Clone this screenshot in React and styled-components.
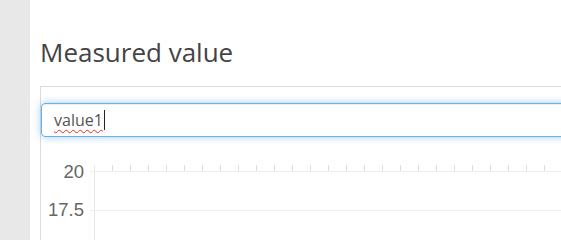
import styled, { createGlobalStyle } from "styled-components";

const GlobalStyle = createGlobalStyle`
  html, body {
    margin: 0;
    padding: 0;
    background: #fff;
    overflow: hidden;
  }
  body {
    font-family: "Open Sans", "Liberation Sans", sans-serif;
  }
`;

const Page = styled.div`
  display: flex;
  height: 100vh;
  overflow: hidden;
`;

const Sidebar = styled.div`
  width: 30px;
  flex: none;
  background: #e8e8e8;
`;

const Main = styled.div`
  flex: 1;
  padding: 36px 0 0 10px;
  min-width: 0;
  overflow: hidden;
`;

const Title = styled.h2`
  margin: 0 0 18px;
  font-size: 26px;
  font-weight: 400;
  line-height: 32px;
  color: #444;
`;

const Panel = styled.div`
  width: calc(100% + 20px);
  border: 1px solid #dcdcdc;
  border-right: none;
  border-bottom: none;
  padding-top: 16px;
  height: 160px;
`;

const Field = styled.div`
  box-sizing: border-box;
  display: flex;
  align-items: center;
  height: 34px;
  padding: 0 12px;
  border: 1px solid #66afe9;
  border-radius: 4px;
  box-shadow: inset 0 1px 1px rgba(0, 0, 0, 0.075),
    0 0 8px rgba(102, 175, 233, 0.6);
  font-size: 16px;
  color: #555;
`;

const Misspelled = styled.span`
  text-decoration: underline wavy #e03030;
  text-decoration-thickness: 1px;
  text-underline-offset: 3px;
`;

const Caret = styled.span`
  display: inline-block;
  width: 1px;
  height: 20px;
  margin-left: 1px;
  background: #222;
`;

const Chart = styled.svg`
  display: block;
  width: 100%;
  margin-top: 14px;
`;

const Label = styled.text`
  font-family: "Liberation Sans", Arial, sans-serif;
  font-size: 18.5px;
  fill: #666;
`;

const ticks = Array.from({ length: 26 }, (_, i) => 53.5 + 18 * (i + 1));

export default function App() {
  return (
    <Page>
      <GlobalStyle />
      <Sidebar />
      <Main>
        <Title>Measured value</Title>
        <Panel>
          <Field>
            <Misspelled>value1</Misspelled>
            <Caret />
          </Field>
          <Chart height="90">
            <line x1="49" y1="20.5" x2="600" y2="20.5" stroke="#eeeeee" />
            <line x1="49" y1="59.5" x2="600" y2="59.5" stroke="#eeeeee" />
            <line x1="53.5" y1="14" x2="53.5" y2="90" stroke="#e8e8e8" />
            {ticks.map((x) => (
              <line key={x} x1={x} y1="14" x2={x} y2="20" stroke="#dedede" />
            ))}
            <Label x="43" y="27" textAnchor="end">20</Label>
            <Label x="43" y="65" textAnchor="end">17.5</Label>
          </Chart>
        </Panel>
      </Main>
    </Page>
  );
}
